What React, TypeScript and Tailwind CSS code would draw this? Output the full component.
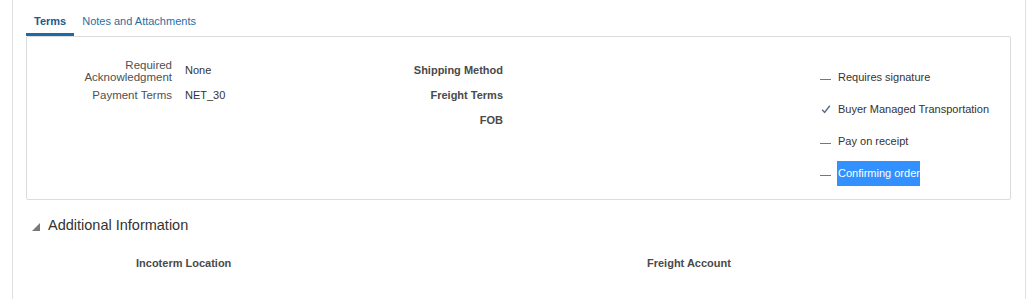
import React from "react";

const Dash = () => (
  <span className="flex w-[11px] h-[25px] items-center mt-[3px]">
    <span className="block w-[11px] h-px bg-[#777]" />
  </span>
);

const Check = () => (
  <span className="flex w-[11px] h-[25px] items-center justify-center">
    <svg width="10" height="9" viewBox="0 0 10 9">
      <path d="M1.2 4.8 L3.6 7.4 L8.8 0.8" fill="none" stroke="#5b6f8c" strokeWidth="1.5" />
    </svg>
  </span>
);

export default function App() {
  return (
    <div
      className="h-[299px] w-[1030px] bg-white overflow-hidden"
      style={{ fontFamily: '"Liberation Sans", Arial, sans-serif' }}
    >
      <div className="ml-[12px] w-[1014px] h-[299px] border-l border-r border-[#e0e0e0] pl-[13px] pr-[14px]">
        {/* Tabs */}
        <div className="flex h-[36px] text-[11px]">
          <div className="px-[8px] pt-[13px] h-[36px] border-b-[3px] border-[#1f6aa5] text-[#1b5a8e] font-bold relative z-10 -mb-px">
            Terms
          </div>
          <div className="px-[8px] pt-[13px] h-[36px] text-[#2a6ea6]">Notes and Attachments</div>
        </div>
        {/* Terms box */}
        <div className="border border-[#dcdcdc] rounded-[2px] h-[164px] pt-[21px] flex text-[11px]">
          <div className="w-[300px] flex flex-col">
            <div className="flex items-center h-[25px]">
              <div className="w-[145px] text-right text-[#505050] text-[11.5px] leading-[12px]">
                Required
                <br />
                Acknowledgment
              </div>
              <div className="ml-[13px] text-[#333]">None</div>
            </div>
            <div className="flex items-center h-[25px]">
              <div className="w-[145px] text-right text-[#505050] text-[11.5px]">Payment Terms</div>
              <div className="ml-[13px] text-[#333]">NET_30</div>
            </div>
          </div>
          <div className="w-[176px] flex flex-col text-right font-bold text-[#4a4a4a]">
            <div className="h-[25px] flex items-center justify-end">Shipping Method</div>
            <div className="h-[25px] flex items-center justify-end">Freight Terms</div>
            <div className="h-[25px] flex items-center justify-end">FOB</div>
          </div>
          <div className="ml-auto w-[190px] mt-[7px] flex flex-col gap-[7px] text-[#333]">
            <div className="flex items-center h-[25px] gap-[7px]">
              <Dash />
              <span>Requires signature</span>
            </div>
            <div className="flex items-center h-[25px] gap-[7px]">
              <Check />
              <span>Buyer Managed Transportation</span>
            </div>
            <div className="flex items-center h-[25px] gap-[7px]">
              <Dash />
              <span>Pay on receipt</span>
            </div>
            <div className="flex items-center h-[25px] gap-[6px]">
              <Dash />
              <span className="inline-block h-[25px] leading-[25px] pl-px whitespace-nowrap bg-[#3390ff] text-white">
                Confirming order
              </span>
            </div>
          </div>
        </div>
        {/* Additional information */}
        <div className="flex items-center h-[26px] mt-[13px] pl-[6px]">
          <svg width="8" height="8" viewBox="0 0 8 8" className="mt-[1px]">
            <path d="M8 0 L8 8 L0 8 Z" fill="#7a7a7a" />
          </svg>
          <span className="ml-[8px] text-[14.5px] text-[#333]">Additional Information</span>
        </div>
        <div className="flex mt-[16px] text-[11px] font-bold text-[#4a4a4a]">
          <div className="ml-[110px] w-[511px]">Incoterm Location</div>
          <div>Freight Account</div>
        </div>
      </div>
    </div>
  );
}
